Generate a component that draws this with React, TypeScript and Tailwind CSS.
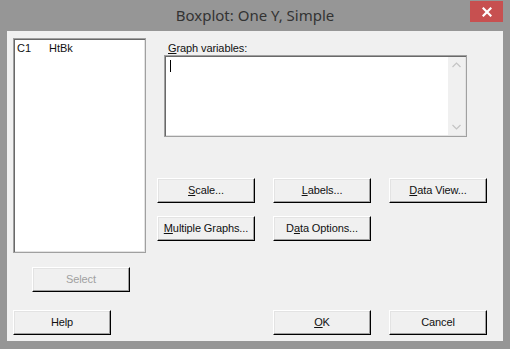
import type { ReactNode } from 'react';

const FONT = { fontFamily: '"Liberation Sans", Arial, sans-serif' };

function U({ children }: { children: ReactNode }) {
  return <span className="underline underline-offset-[1px]">{children}</span>;
}

function Btn({ children, disabled, className = '' }: { children: ReactNode; disabled?: boolean; className?: string }) {
  return (
    <button
      type="button"
      className={`h-[25px] w-[98px] shrink-0 border border-t-white border-l-white border-r-black border-b-black bg-[#f0f0f0] text-[11px] leading-none tracking-[-0.1px] shadow-[inset_-1px_-1px_0_#a0a0a0,inset_1px_1px_0_#e3e3e3] ${
        disabled ? 'text-[#a0a0a0]' : 'text-[#111]'
      } ${className}`}
    >
      {children}
    </button>
  );
}

export default function App() {
  return (
    <div className="flex h-[349px] w-[510px] flex-col bg-[#969696]" style={FONT}>
      {/* Title bar */}
      <div className="relative flex h-[31px] items-center justify-center">
        <span
          className="pb-[1px] text-[15px] text-[#333333]"
          style={{ fontFamily: '"Noto Sans", "Open Sans", sans-serif' }}
        >
          Boxplot: One Y, Simple
        </span>
        <div className="absolute right-[7px] top-[1px] flex h-[21px] w-[33px] items-center justify-center bg-[#c75050]">
          <svg width="10" height="10" viewBox="0 0 10 10">
            <path d="M1.5 1.5 L8.5 8.5 M8.5 1.5 L1.5 8.5" stroke="white" strokeWidth="2.2" strokeLinecap="square" />
          </svg>
        </div>
      </div>

      {/* Client area */}
      <div className="ml-[7px] flex h-[310px] w-[496px] flex-col bg-[#f0f0f0] px-[6px] pt-[7px]">
        <div className="flex">
          {/* Left column */}
          <div className="flex w-[133px] flex-col">
            <div className="h-[215px] w-[133px] border border-[#a0a0a0] bg-white px-[3px] pt-[2px] shadow-[inset_1px_1px_0_#696969,inset_-1px_-1px_0_#e3e3e3]">
              <div className="flex text-[11px] leading-[14px] text-[#111]">
                <span className="w-[32px]">C1</span>
                <span>HtBk</span>
              </div>
            </div>
            <Btn disabled className="ml-[19px] mt-[14px]">Select</Btn>
          </div>

          {/* Right column */}
          <div className="ml-[11px] flex flex-col">
            <div className="ml-[11px] mt-[3px] text-[11px] leading-[14px] tracking-[-0.1px] text-[#111]">
              <U>G</U>raph variables:
            </div>
            <div className="ml-[7px] flex h-[82px] w-[303px] border border-[#a0a0a0] bg-white shadow-[inset_1px_1px_0_#696969,inset_-1px_-1px_0_#e3e3e3]">
              <div className="flex-1 pl-[5px] pt-[4px]">
                <div className="h-[12px] w-[1px] bg-black" />
              </div>
              <div className="my-[1px] mr-[1px] flex w-[17px] flex-col items-center justify-between bg-[#f0f0f0] py-[5px]">
                <svg width="9" height="6" viewBox="0 0 9 6">
                  <path d="M0.5 5 L4.5 1 L8.5 5" fill="none" stroke="#c4c4c4" strokeWidth="1.2" />
                </svg>
                <svg width="9" height="6" viewBox="0 0 9 6">
                  <path d="M0.5 1 L4.5 5 L8.5 1" fill="none" stroke="#c4c4c4" strokeWidth="1.2" />
                </svg>
              </div>
            </div>

            <div className="mt-[41px] flex gap-[18px]">
              <Btn><U>S</U>cale...</Btn>
              <Btn><U>L</U>abels...</Btn>
              <Btn><U>D</U>ata View...</Btn>
            </div>
            <div className="mt-[13px] flex gap-[18px]">
              <Btn><U>M</U>ultiple Graphs...</Btn>
              <Btn>D<U>a</U>ta Options...</Btn>
            </div>
          </div>
        </div>

        {/* Bottom row */}
        <div className="mt-[18px] flex">
          <Btn className="h-[24px]">Help</Btn>
          <Btn className="ml-[162px] h-[24px]"><U>O</U>K</Btn>
          <Btn className="ml-[18px] h-[24px]">Cancel</Btn>
        </div>
      </div>
    </div>
  );
}
